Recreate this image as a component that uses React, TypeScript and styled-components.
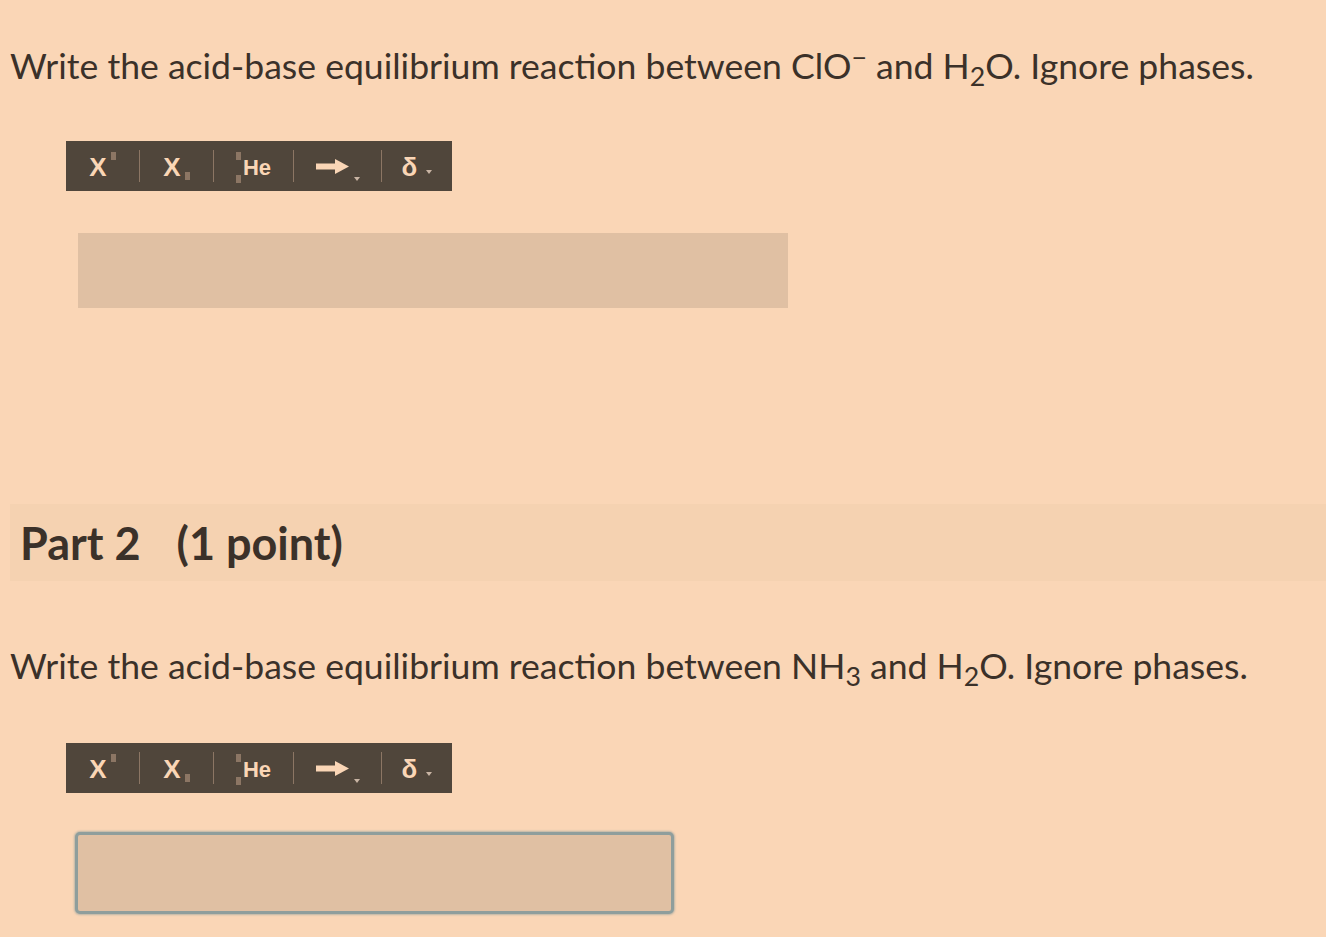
import React from 'react';
import styled, { createGlobalStyle } from 'styled-components';

const GlobalStyle = createGlobalStyle`
  html, body {
    margin: 0;
    padding: 0;
    background: #fad6b6;
  }
  body {
    font-family: Lato, "Open Sans", sans-serif;
    color: #3b3129;
  }
`;

const Page = styled.div`
  min-height: 937px;
  padding: 42px 0 0 10px;
  box-sizing: border-box;
  overflow: hidden;
`;

const Prompt = styled.p`
  margin: 0;
  font-size: 35.6px;
  line-height: 48px;
  white-space: nowrap;

  sub {
    font-size: 0.75em;
    line-height: 0;
    vertical-align: -0.25em;
  }

  sup {
    font-size: 0.75em;
    line-height: 0;
    vertical-align: 0.45em;
  }
`;

const Editor = styled.div<{ $top: number }>`
  margin-top: ${({ $top }) => $top}px;
  padding-left: 56px;
  display: flex;
  flex-direction: column;
  align-items: flex-start;
`;

const Toolbar = styled.div`
  display: flex;
  align-items: center;
  height: 50px;
  background: #50463b;
`;

const ToolButton = styled.div<{ $w: number }>`
  width: ${({ $w }) => $w}px;
  height: 100%;
  display: flex;
  align-items: center;
  justify-content: center;
  color: #fad6b6;
  font-family: "Liberation Sans", Arial, sans-serif;
  font-weight: bold;
  font-size: 26px;
`;

const Divider = styled.div`
  width: 1px;
  height: 32px;
  background: #8c7664;
`;

const Slot = styled.span<{ $pos: 'sup' | 'sub' }>`
  display: inline-block;
  width: 5px;
  height: 8px;
  margin-left: 4px;
  background: #8c7664;
  align-self: ${({ $pos }) => ($pos === 'sup' ? 'flex-start' : 'flex-end')};
  margin-${({ $pos }) => ($pos === 'sup' ? 'top' : 'bottom')}: 11px;
`;

const Glyph = styled.span`
  display: inline-flex;
  align-items: center;
  height: 100%;
  padding-top: 2px;
`;

const SlotStack = styled.span`
  display: inline-flex;
  flex-direction: column;
  justify-content: space-between;
  height: 31px;
  margin-right: 2px;
  margin-top: 2px;

  &::before,
  &::after {
    content: '';
    width: 5px;
    height: 8px;
    background: #8c7664;
  }
`;

const ElementText = styled.span`
  font-size: 22px;
  padding-top: 3px;
`;

const Caret = styled.span<{ $low?: boolean }>`
  width: 0;
  height: 0;
  border-left: 3px solid transparent;
  border-right: 3px solid transparent;
  border-top: 4px solid #c9b5a4;
  align-self: flex-end;
  margin: 0 0 ${({ $low }) => ($low ? 10 : 17)}px ${({ $low }) => ($low ? 5 : 9)}px;
`;

const Answer = styled.div<{ $w: number; $h: number; $focused?: boolean }>`
  width: ${({ $w }) => $w}px;
  height: ${({ $h }) => $h}px;
  background: #e0c0a3;
  box-sizing: border-box;
  border-radius: ${({ $focused }) => ($focused ? '5px' : '0')};
  border: ${({ $focused }) => ($focused ? '3px solid #8f9e9c' : 'none')};
  box-shadow: ${({ $focused }) => ($focused ? '0 0 2px 1px rgba(143, 158, 156, 0.6)' : 'none')};
  margin-left: ${({ $focused }) => ($focused ? 9 : 12)}px;
`;

const PartBand = styled.div`
  margin-top: 196px;
  height: 77px;
  background: #f5d2b1;
  display: flex;
  align-items: center;
  gap: 36px;
  padding-left: 10px;
  font-size: 45px;
  color: #3b3129;
`;

const PartTitle = styled.span`
  font-weight: bold;
`;

const SecondPrompt = styled(Prompt)`
  margin-top: 61px;
`;

function Arrow() {
  return (
    <svg width="33" height="15" viewBox="0 0 33 15">
      <rect x="0" y="4.5" width="21" height="6" fill="#fad6b6" />
      <polygon points="19,0 33,7.5 19,15" fill="#fad6b6" />
    </svg>
  );
}

function ChemToolbar() {
  return (
    <Toolbar>
      <ToolButton $w={73}>
        <Glyph>X</Glyph>
        <Slot $pos="sup" />
      </ToolButton>
      <Divider />
      <ToolButton $w={73}>
        <Glyph>X</Glyph>
        <Slot $pos="sub" />
      </ToolButton>
      <Divider />
      <ToolButton $w={79}>
        <SlotStack />
        <ElementText>He</ElementText>
      </ToolButton>
      <Divider />
      <ToolButton $w={87}>
        <Arrow />
        <Caret $low />
      </ToolButton>
      <Divider />
      <ToolButton $w={70}>
        <Glyph>δ</Glyph>
        <Caret />
      </ToolButton>
    </Toolbar>
  );
}

export default function App() {
  return (
    <>
      <GlobalStyle />
      <Page>
        <Prompt>
          Write the acid-base equilibrium reaction between ClO<sup>−</sup> and H<sub>2</sub>O. Ignore phases.
        </Prompt>
        <Editor $top={51}>
          <ChemToolbar />
          <div style={{ height: 42 }} />
          <Answer $w={710} $h={75} />
        </Editor>
        <PartBand>
          <PartTitle>Part 2</PartTitle>
          <PartTitle>(1 point)</PartTitle>
        </PartBand>
        <SecondPrompt>
          Write the acid-base equilibrium reaction between NH<sub>3</sub> and H<sub>2</sub>O. Ignore phases.
        </SecondPrompt>
        <Editor $top={53}>
          <ChemToolbar />
          <div style={{ height: 39 }} />
          <Answer $w={599} $h={82} $focused />
        </Editor>
      </Page>
    </>
  );
}
